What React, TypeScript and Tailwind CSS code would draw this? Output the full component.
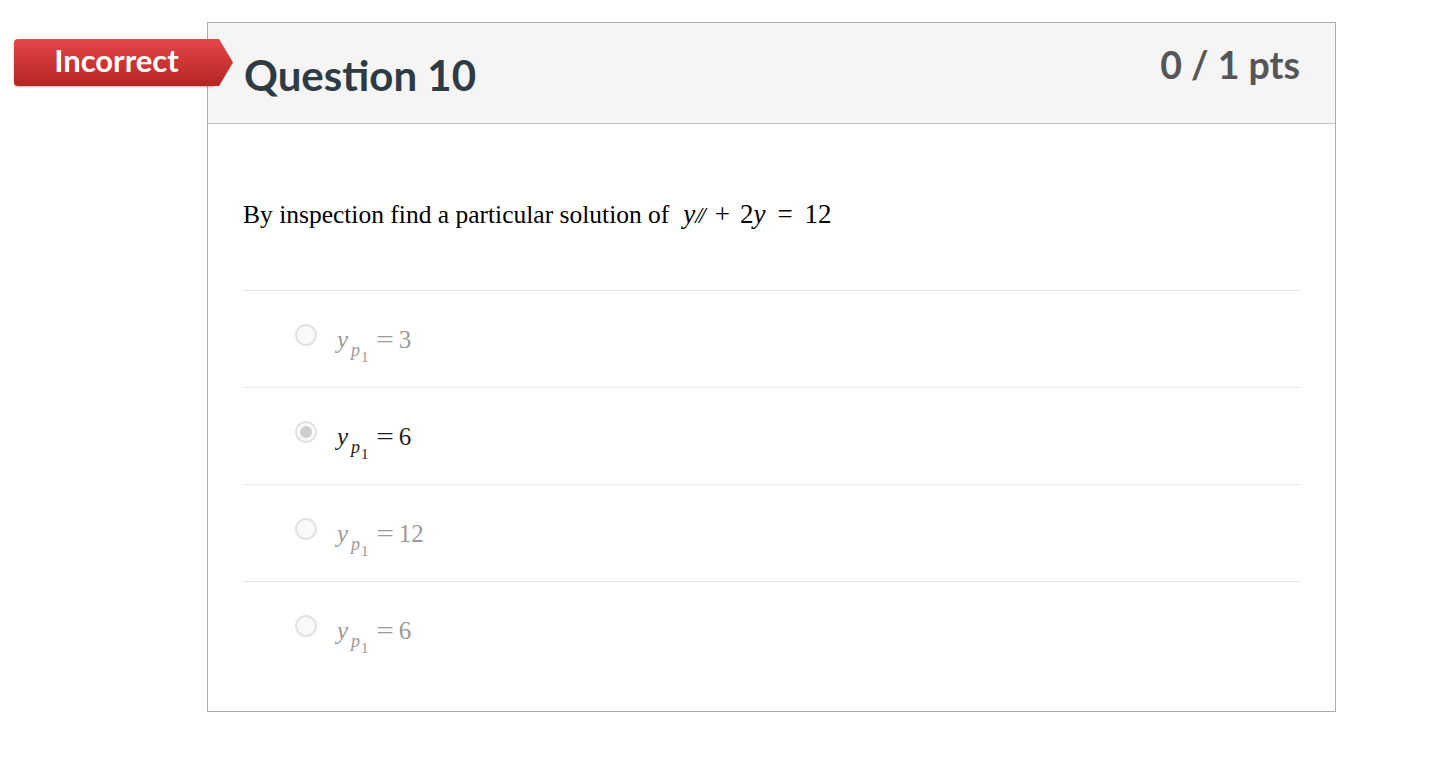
import React from "react";

type Answer = { value: string; selected?: boolean };

const answers: Answer[] = [
  { value: "3" },
  { value: "6", selected: true },
  { value: "12" },
  { value: "6" },
];

function Radio({ checked }: { checked?: boolean }) {
  return (
    <span className="flex h-[22px] w-[22px] items-center justify-center rounded-full border-2 border-[#e2e2e2] bg-[#f9f9f9]">
      {checked && <span className="h-[12px] w-[12px] rounded-full bg-[#cfcfcf]" />}
    </span>
  );
}

function Yp({ value, dark }: { value: string; dark?: boolean }) {
  return (
    <span
      className={`-mt-[3px] flex items-baseline font-['Liberation_Serif',serif] text-[25px] ${
        dark ? "text-[#1e1e1e]" : "text-[#9a9a9a]"
      }`}
    >
      <span className="italic">y</span>
      <span className="relative top-[8px] ml-[3px] text-[18px] italic">p</span>
      <span className="relative top-[14px] ml-[1px] text-[15px]">1</span>
      <span className="ml-[9px] scale-x-125">=</span>
      <span className="ml-[7px]">{value}</span>
    </span>
  );
}

export default function App() {
  return (
    <div className="relative min-h-screen bg-white font-['Lato',sans-serif]">
      <div className="absolute left-[14px] top-[39px] flex h-[47px] items-center">
        <div className="flex h-full w-[200px] items-center justify-center rounded-l-[4px] bg-gradient-to-b from-[#e54646] to-[#b52323] shadow-[0_1px_2px_rgba(0,0,0,0.3)]">
          <span className="-mt-[4px] pl-[5px] text-[31px] font-bold text-white">Incorrect</span>
        </div>
        <svg width="20" height="47" viewBox="0 0 20 47" className="-ml-px">
          <defs>
            <linearGradient id="bg" x1="0" y1="0" x2="0" y2="1">
              <stop offset="0" stopColor="#e54646" />
              <stop offset="1" stopColor="#b52323" />
            </linearGradient>
          </defs>
          <path d="M0 0 L6 0 L20 23.5 L6 47 L0 47 Z" fill="url(#bg)" />
        </svg>
      </div>

      <div className="pt-[22px] pl-[207px]">
        <div className="w-[1129px] border border-[#adadad]">
          <div className="flex h-[101px] items-start justify-between border-b border-[#c3c3c3] bg-[#f5f5f5] pl-[36px] pr-[35px]">
            <h2 className="mt-[31px] text-[42px] font-bold leading-none text-[#2d3b45]">Question 10</h2>
            <div className="mt-[23px] text-[37.5px] font-bold leading-none text-[#565656]">0 / 1 pts</div>
          </div>

          <div className="px-[35px] pb-[33px]">
            <p className="mt-[70px] flex items-baseline font-['Liberation_Serif',serif] text-[25.5px] text-black">
              By inspection find a particular solution of
              <span className="ml-[14px] text-[27px] italic">y</span>
              <span className="text-[24px] italic tracking-[-3px]">//</span>
              <span className="ml-[12px] text-[27px]">+</span>
              <span className="ml-[10px] text-[27px]">2</span>
              <span className="text-[27px] italic">y</span>
              <span className="ml-[12px] text-[27px]">=</span>
              <span className="ml-[12px] text-[27px]">12</span>
            </p>

            <div className="mt-[55px]">
              {answers.map((a, i) => (
                <div
                  key={i}
                  className="flex h-[97px] items-start gap-[20px] border-t border-[#e6e6e6] pl-[52px] pt-[33px]"
                >
                  <Radio checked={a.selected} />
                  <Yp value={a.value} dark={a.selected} />
                </div>
              ))}
            </div>
          </div>
        </div>
      </div>
    </div>
  );
}
